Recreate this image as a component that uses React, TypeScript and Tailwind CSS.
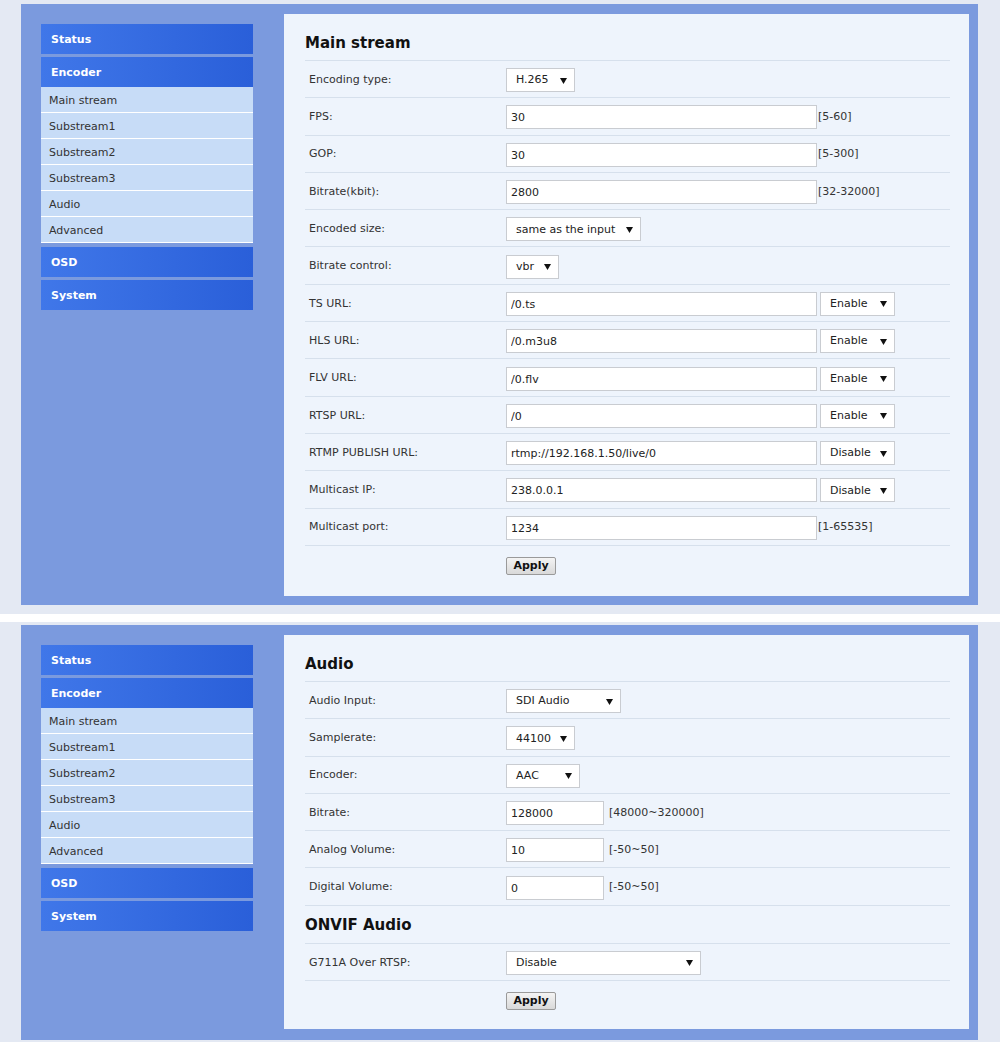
import React from "react";

type Row =
  | { kind: "input"; label: string; value: string; range?: string; width?: number; extra?: string }
  | { kind: "select"; label: string; value: string; width: number }
  | { kind: "heading"; label: string };

const font = { fontFamily: '"DejaVu Sans", Verdana, sans-serif' };

const mainRows: Row[] = [
  { kind: "select", label: "Encoding type:", value: "H.265", width: 69 },
  { kind: "input", label: "FPS:", value: "30", range: "[5-60]" },
  { kind: "input", label: "GOP:", value: "30", range: "[5-300]" },
  { kind: "input", label: "Bitrate(kbit):", value: "2800", range: "[32-32000]" },
  { kind: "select", label: "Encoded size:", value: "same as the input", width: 135 },
  { kind: "select", label: "Bitrate control:", value: "vbr", width: 53 },
  { kind: "input", label: "TS URL:", value: "/0.ts", extra: "Enable" },
  { kind: "input", label: "HLS URL:", value: "/0.m3u8", extra: "Enable" },
  { kind: "input", label: "FLV URL:", value: "/0.flv", extra: "Enable" },
  { kind: "input", label: "RTSP URL:", value: "/0", extra: "Enable" },
  { kind: "input", label: "RTMP PUBLISH URL:", value: "rtmp://192.168.1.50/live/0", extra: "Disable" },
  { kind: "input", label: "Multicast IP:", value: "238.0.0.1", extra: "Disable" },
  { kind: "input", label: "Multicast port:", value: "1234", range: "[1-65535]" },
];

const audioRows: Row[] = [
  { kind: "select", label: "Audio Input:", value: "SDI Audio", width: 115 },
  { kind: "select", label: "Samplerate:", value: "44100", width: 69 },
  { kind: "select", label: "Encoder:", value: "AAC", width: 74 },
  { kind: "input", label: "Bitrate:", value: "128000", range: "[48000~320000]", width: 98 },
  { kind: "input", label: "Analog Volume:", value: "10", range: "[-50~50]", width: 98 },
  { kind: "input", label: "Digital Volume:", value: "0", range: "[-50~50]", width: 98 },
  { kind: "heading", label: "ONVIF Audio" },
  { kind: "select", label: "G711A Over RTSP:", value: "Disable", width: 195 },
];

const subItems = ["Main stream", "Substream1", "Substream2", "Substream3", "Audio", "Advanced"];

function MenuHeader({ title, className = "" }: { title: string; className?: string }) {
  return (
    <div
      className={`h-[30px] flex items-center pl-[10px] pt-[3px] text-[11px] font-bold text-white bg-gradient-to-r from-[#4077e9] to-[#2a5fd9] ${className}`}
    >
      {title}
    </div>
  );
}

function Sidebar() {
  return (
    <div className="w-[212px] shrink-0 flex flex-col">
      <MenuHeader title="Status" className="mb-[3px]" />
      <MenuHeader title="Encoder" />
      {subItems.map((s) => (
        <div
          key={s}
          className="h-[26px] flex items-center pl-[8px] pt-[3px] text-[11px] text-[#333] bg-[#c7dcf7] border-b border-white last:border-b-0"
        >
          {s}
        </div>
      ))}
      <MenuHeader title="OSD" className="mt-[4px] mb-[3px]" />
      <MenuHeader title="System" />
    </div>
  );
}

function Arrow() {
  return (
    <svg width="7" height="7" viewBox="0 0 7 7" className="shrink-0">
      <path d="M0 1 L7 1 L3.5 7 Z" fill="#111" />
    </svg>
  );
}

function Select({ value, width }: { value: string; width: number }) {
  return (
    <div
      className="h-[24px] flex items-center justify-between pl-[9px] pr-[7px] bg-white border border-[#c9ccd1] text-[11px] text-[#222]"
      style={{ width }}
    >
      <span className="pt-[1px]">{value}</span>
      <Arrow />
    </div>
  );
}

function TextBox({ value, width }: { value: string; width: number }) {
  return (
    <input
      readOnly
      value={value}
      className="h-[24px] pl-[4px] pt-[1px] bg-white border border-[#c9ccd1] text-[11px] text-[#222] outline-none"
      style={{ width, ...font }}
    />
  );
}

function FormRow({ row }: { row: Row }) {
  if (row.kind === "heading") {
    return (
      <div className="h-[38px] flex items-center pt-[2px] border-b border-[#d6e0ec] text-[15px] font-bold text-[#111]">
        {row.label}
      </div>
    );
  }
  return (
    <div className="h-[37.3px] flex items-center pt-[2px] border-b border-[#d6e0ec] text-[11px] text-[#333]">
      <div className="w-[201px] pl-[4px]">{row.label}</div>
      {row.kind === "select" ? (
        <Select value={row.value} width={row.width} />
      ) : (
        <div className="flex items-center">
          <TextBox value={row.value} width={row.width ?? 311} />
          {row.range && <span className={row.width ? "ml-[5px]" : "ml-[1px]"}>{row.range}</span>}
          {row.extra && (
            <div className="ml-[3px]">
              <Select value={row.extra} width={75} />
            </div>
          )}
        </div>
      )}
    </div>
  );
}

function ApplyButton() {
  return (
    <button className="w-[50px] h-[18px] flex items-center justify-center pt-[1px] text-[11px] font-bold text-[#111] bg-gradient-to-b from-[#f4f4f4] to-[#d9d9d9] border border-[#9a9a9a] rounded-[2px]">
      Apply
    </button>
  );
}

function Panel({ title, rows, height, innerHeight }: { title: string; rows: Row[]; height: number; innerHeight: number }) {
  return (
    <div className="ml-[21px] w-[957px] bg-[#7b9ade] flex" style={{ height }}>
      <div className="pl-[20px] pt-[20px]">
        <Sidebar />
      </div>
      <div
        className="ml-[31px] mt-[10px] w-[685px] bg-[#eef4fc] pl-[21px] pr-[19px] pt-[11px]"
        style={{ height: innerHeight }}
      >
        <div className="h-[36px] flex items-center pt-[2px] border-b border-[#d6e0ec] text-[15px] font-bold text-[#111]">
          {title}
        </div>
        {rows.map((r) => (
          <FormRow key={r.label} row={r} />
        ))}
        <div className="pl-[201px] pt-[11px]">
          <ApplyButton />
        </div>
      </div>
    </div>
  );
}

export default function App() {
  return (
    <div className="w-[1000px] h-[1042px] bg-[#e4e9f3] overflow-hidden pt-[4px]" style={font}>
      <Panel title="Main stream" rows={mainRows} height={601} innerHeight={582} />
      <div className="h-[9px]" />
      <div className="h-[8px] bg-white" />
      <div className="h-[3px]" />
      <Panel title="Audio" rows={audioRows} height={415} innerHeight={394} />
    </div>
  );
}
